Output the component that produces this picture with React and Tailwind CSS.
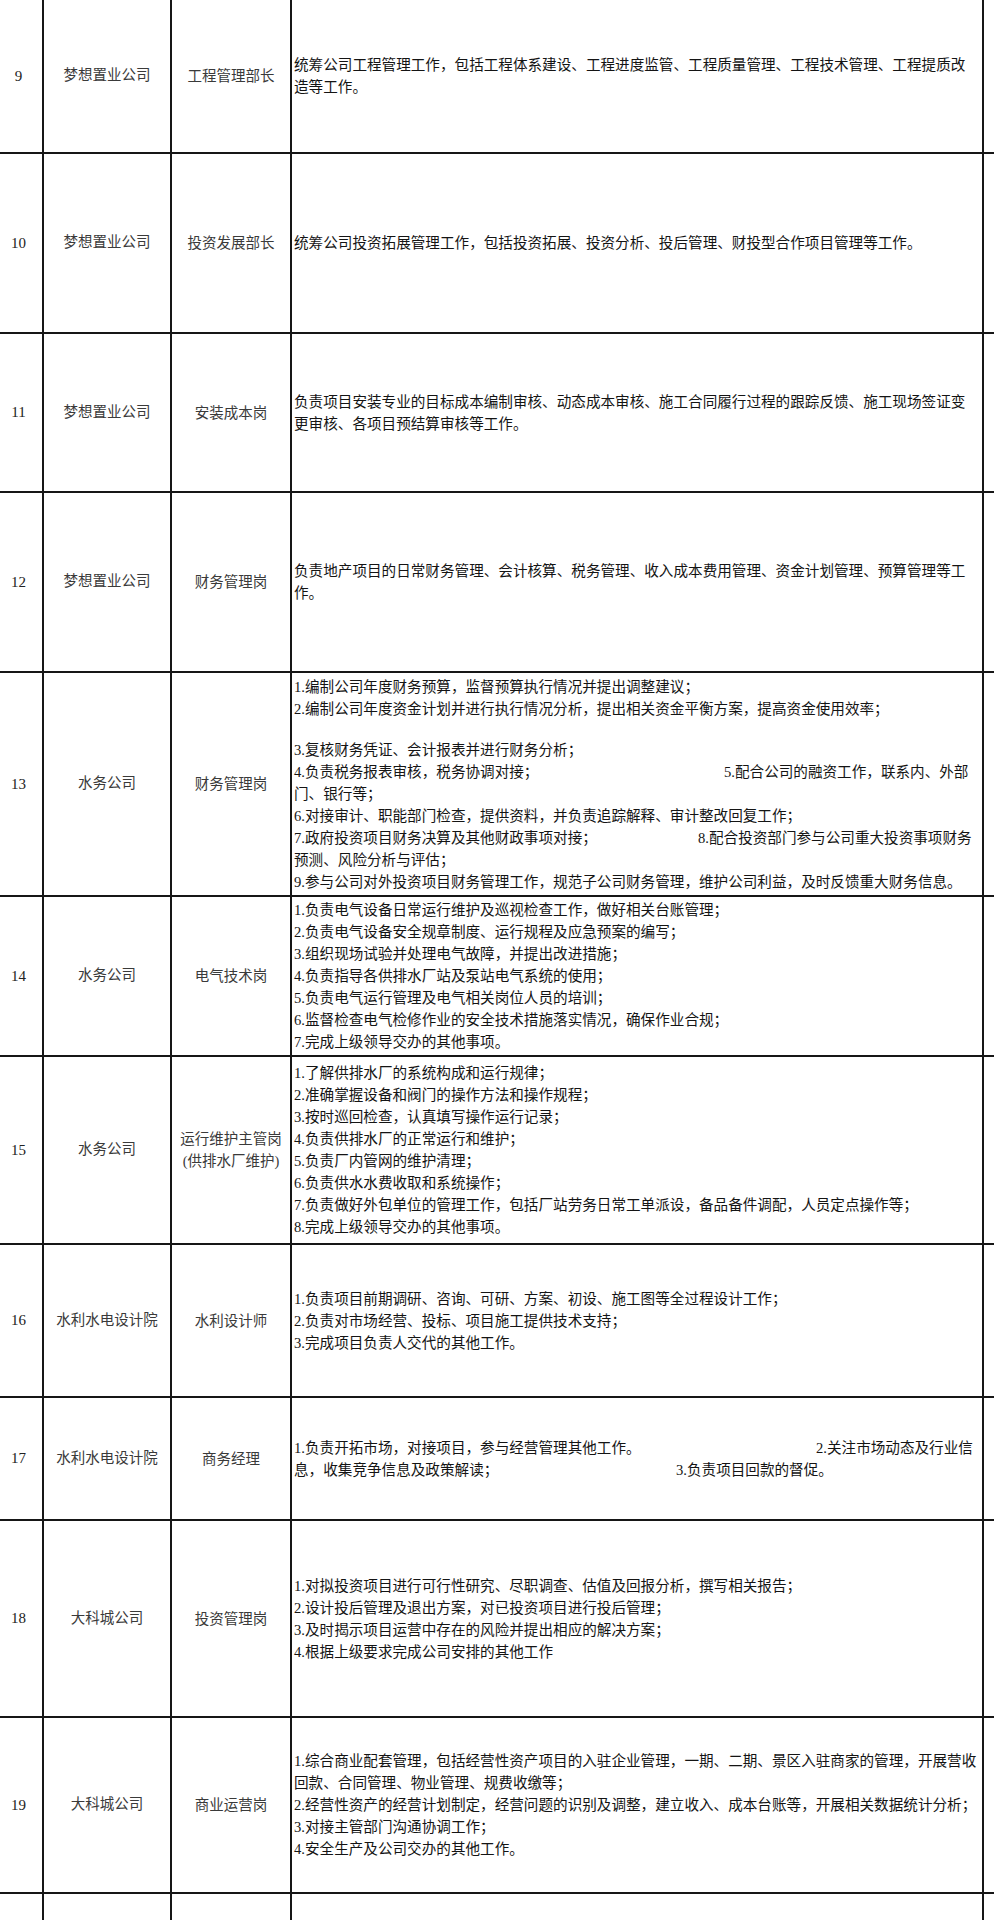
import React from 'react';

// job list table, rows 9-19 (row 20 cut off at bottom)
const rows = [
  {
    no: '9', h: 'h-[154px]', company: '梦想置业公司', post: ['工程管理部长'],
    duty: ['统筹公司工程管理工作，包括工程体系建设、工程进度监管、工程质量管理、工程技术管理、工程提质改', '造等工作。'],
  },
  {
    no: '10', h: 'h-[180px]', company: '梦想置业公司', post: ['投资发展部长'],
    duty: ['统筹公司投资拓展管理工作，包括投资拓展、投资分析、投后管理、财投型合作项目管理等工作。'],
  },
  {
    no: '11', h: 'h-[159px]', company: '梦想置业公司', post: ['安装成本岗'],
    duty: ['负责项目安装专业的目标成本编制审核、动态成本审核、施工合同履行过程的跟踪反馈、施工现场签证变', '更审核、各项目预结算审核等工作。'],
  },
  {
    no: '12', h: 'h-[180px]', company: '梦想置业公司', post: ['财务管理岗'],
    duty: ['负责地产项目的日常财务管理、会计核算、税务管理、收入成本费用管理、资金计划管理、预算管理等工', '作。'],
  },
  {
    no: '13', h: 'h-[224px]', company: '水务公司', post: ['财务管理岗'],
    duty: [
      '1.编制公司年度财务预算，监督预算执行情况并提出调整建议；',
      '2.编制公司年度资金计划并进行执行情况分析，提出相关资金平衡方案，提高资金使用效率；',
      null,
      '3.复核财务凭证、会计报表并进行财务分析；',
      { a: '4.负责税务报表审核，税务协调对接；', b: '5.配合公司的融资工作，联系内、外部', w: 'w-[430px]' },
      '门、银行等；',
      '6.对接审计、职能部门检查，提供资料，并负责追踪解释、审计整改回复工作；',
      { a: '7.政府投资项目财务决算及其他财政事项对接；', b: '8.配合投资部门参与公司重大投资事项财务', w: 'w-[404px]' },
      '预测、风险分析与评估；',
      '9.参与公司对外投资项目财务管理工作，规范子公司财务管理，维护公司利益，及时反馈重大财务信息。',
    ],
  },
  {
    no: '14', h: 'h-[160px]', company: '水务公司', post: ['电气技术岗'],
    duty: [
      '1.负责电气设备日常运行维护及巡视检查工作，做好相关台账管理；',
      '2.负责电气设备安全规章制度、运行规程及应急预案的编写；',
      '3.组织现场试验并处理电气故障，并提出改进措施；',
      '4.负责指导各供排水厂站及泵站电气系统的使用；',
      '5.负责电气运行管理及电气相关岗位人员的培训；',
      '6.监督检查电气检修作业的安全技术措施落实情况，确保作业合规；',
      '7.完成上级领导交办的其他事项。',
    ],
  },
  {
    no: '15', h: 'h-[188px]', company: '水务公司', post: ['运行维护主管岗', '(供排水厂维护)'],
    duty: [
      '1.了解供排水厂的系统构成和运行规律；',
      '2.准确掌握设备和阀门的操作方法和操作规程；',
      '3.按时巡回检查，认真填写操作运行记录；',
      '4.负责供排水厂的正常运行和维护；',
      '5.负责厂内管网的维护清理；',
      '6.负责供水水费收取和系统操作；',
      '7.负责做好外包单位的管理工作，包括厂站劳务日常工单派设，备品备件调配，人员定点操作等；',
      '8.完成上级领导交办的其他事项。',
    ],
  },
  {
    no: '16', h: 'h-[153px]', company: '水利水电设计院', post: ['水利设计师'],
    duty: [
      '1.负责项目前期调研、咨询、可研、方案、初设、施工图等全过程设计工作；',
      '2.负责对市场经营、投标、项目施工提供技术支持；',
      '3.完成项目负责人交代的其他工作。',
    ],
  },
  {
    no: '17', h: 'h-[123px]', company: '水利水电设计院', post: ['商务经理'],
    duty: [
      { a: '1.负责开拓市场，对接项目，参与经营管理其他工作。', b: '2.关注市场动态及行业信', w: 'w-[522px]' },
      { a: '息，收集竞争信息及政策解读；', b: '3.负责项目回款的督促。', w: 'w-[382px]' },
    ],
  },
  {
    no: '18', h: 'h-[197px]', company: '大科城公司', post: ['投资管理岗'],
    duty: [
      '1.对拟投资项目进行可行性研究、尽职调查、估值及回报分析，撰写相关报告；',
      '2.设计投后管理及退出方案，对已投资项目进行投后管理；',
      '3.及时揭示项目运营中存在的风险并提出相应的解决方案；',
      '4.根据上级要求完成公司安排的其他工作',
    ],
  },
  {
    no: '19', h: 'h-[176px]', company: '大科城公司', post: ['商业运营岗'],
    duty: [
      '1.综合商业配套管理，包括经营性资产项目的入驻企业管理，一期、二期、景区入驻商家的管理，开展营收',
      '回款、合同管理、物业管理、规费收缴等；',
      '2.经营性资产的经营计划制定，经营问题的识别及调整，建立收入、成本台账等，开展相关数据统计分析；',
      '3.对接主管部门沟通协调工作；',
      '4.安全生产及公司交办的其他工作。',
    ],
  },
  { no: '', h: 'h-[40px]', company: '', post: [], duty: [] },
];

function DutyLine({ line }) {
  if (line === null) return <div className="h-[19px]" />;
  if (typeof line === 'string') return <div className="whitespace-nowrap">{line}</div>;
  return (
    <div className="flex whitespace-nowrap">
      <span className={`${line.w} shrink-0`}>{line.a}</span>
      <span>{line.b}</span>
    </div>
  );
}

function Row({ row }) {
  return (
    <div className={`flex ${row.h} border-b-2 border-[#161616]`}>
      <div className="w-[44px] shrink-0 border-r-2 border-[#161616] flex items-center justify-center pr-[5px] text-[15px] text-[#222]">
        {row.no}
      </div>
      <div className="w-[128px] shrink-0 border-r-2 border-[#161616] flex items-center justify-center text-[14.5px] text-[#3a3a3a]">
        {row.company}
      </div>
      <div className="w-[120px] shrink-0 border-r-2 border-[#161616] flex flex-col items-center justify-center text-[14.5px] leading-[22px] text-[#3a3a3a]">
        {row.post.map((p) => <div key={p}>{p}</div>)}
      </div>
      <div className="w-[692px] shrink-0 border-r-2 border-[#161616] flex flex-col justify-center pl-[2px] text-[14.6px] leading-[22px] text-[#141414]">
        {row.duty.map((line, i) => <DutyLine key={i} line={line} />)}
      </div>
    </div>
  );
}

export default function App() {
  return (
    <div className="w-[994px] h-[1920px] overflow-hidden bg-white font-['Liberation_Serif','Noto_Sans_CJK_SC',serif]">
      {rows.map((row, i) => <Row key={i} row={row} />)}
    </div>
  );
}
